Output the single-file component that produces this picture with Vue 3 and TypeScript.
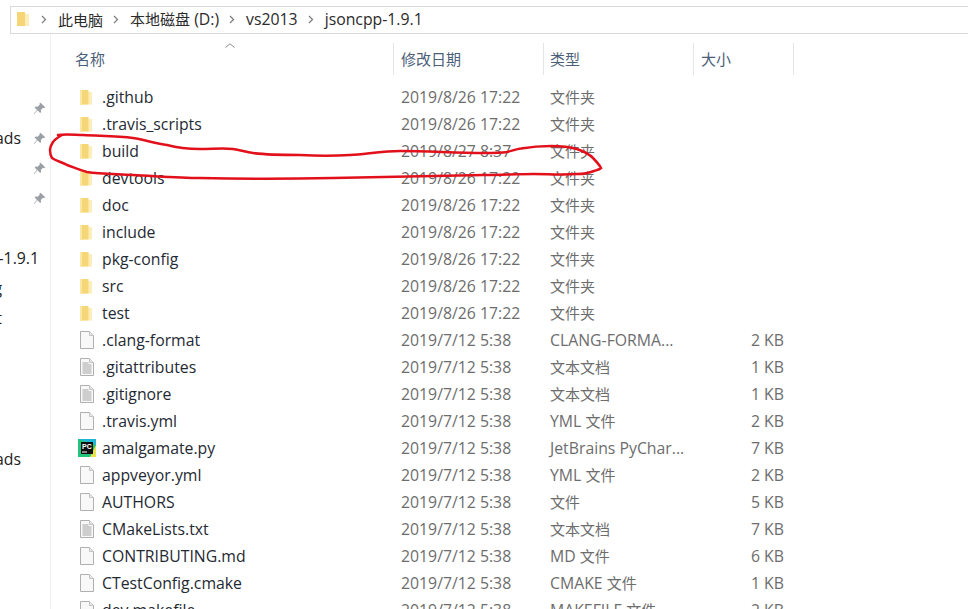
<script setup lang="ts">
type Kind = 'folder' | 'file' | 'text' | 'pycharm'

interface Row {
  name: string
  date: string
  type: string
  size: string
  kind: Kind
}

const folderDate = '2019/8/26 17:22'
const fileDate = '2019/7/12 5:38'

const folders = ['.github', '.travis_scripts', 'build', 'devtools', 'doc', 'include', 'pkg-config', 'src', 'test']

const rows: Row[] = [
  ...folders.map((name): Row => ({
    name,
    date: name === 'build' ? '2019/8/27 8:37' : folderDate,
    type: '文件夹',
    size: '',
    kind: 'folder',
  })),
  { name: '.clang-format', date: fileDate, type: 'CLANG-FORMA...', size: '2 KB', kind: 'file' },
  { name: '.gitattributes', date: fileDate, type: '文本文档', size: '1 KB', kind: 'text' },
  { name: '.gitignore', date: fileDate, type: '文本文档', size: '1 KB', kind: 'text' },
  { name: '.travis.yml', date: fileDate, type: 'YML 文件', size: '2 KB', kind: 'file' },
  { name: 'amalgamate.py', date: fileDate, type: 'JetBrains PyChar...', size: '7 KB', kind: 'pycharm' },
  { name: 'appveyor.yml', date: fileDate, type: 'YML 文件', size: '2 KB', kind: 'file' },
  { name: 'AUTHORS', date: fileDate, type: '文件', size: '5 KB', kind: 'file' },
  { name: 'CMakeLists.txt', date: fileDate, type: '文本文档', size: '7 KB', kind: 'text' },
  { name: 'CONTRIBUTING.md', date: fileDate, type: 'MD 文件', size: '6 KB', kind: 'file' },
  { name: 'CTestConfig.cmake', date: fileDate, type: 'CMAKE 文件', size: '1 KB', kind: 'file' },
  { name: 'dev.makefile', date: fileDate, type: 'MAKEFILE 文件', size: '2 KB', kind: 'file' },
]

const crumbs = ['此电脑', '本地磁盘 (D:)', 'vs2013', 'jsoncpp-1.9.1']

const nav = [
  { label: '', pin: true },
  { label: 'ads', pin: true },
  { label: '', pin: true },
  { label: '', pin: true },
  { label: '', pin: false },
  { label: '-1.9.1', pin: false },
  { label: 'g', pin: false },
  { label: 't', pin: false },
  { label: '', pin: false },
  { label: '', pin: false },
  { label: '', pin: false },
  { label: 'ads', pin: false },
]

// latin runs are set a little larger than the CJK ones, like the system font does
function runs(text: string) {
  return text.split(/([\x00-\x7f]+)/).filter(Boolean).map((t) => ({
    text: t,
    latin: /^[\x00-\x7f]+$/.test(t),
  }))
}

const scribble =
  'M58 135 C66 134 76 135 83 135 C100 136 118 136 133 138 C146 140 156 144 167 145 C178 148 190 149 200 149 C212 149 224 148 233 149 C240 150 246 152 253 153 C268 155 284 155 300 155 C318 156 334 156 350 155 C366 154 384 151 400 151 C428 151 456 153 484 153 C492 153 500 153 507 152 C512 151 516 149 521 148.5 C530 147 541 146 551 146 C560 146 570 147 577 149 C583 151 587 153 591 156 C595 160 599 164 601 168 C599 170 597 170 594 171 C589 173 583 174 577 174 C562 175 548 174 534 174 C518 174 500 175 484 175 C434 176 384 177 333 178 C288 179 244 179 200 178 C178 178 155 176 133 175 C117 174 100 174 87 172 C79 170 73 167 67 165 C62 162 56 161 52 158 C50 155 50 153 50 150 C50 147 51 145 53 142 C55 139 59 137 62 135'
</script>

<template>
  <div class="explorer">
    <div class="address-bar">
      <svg class="crumb-folder" width="12" height="16" viewBox="0 0 12 16">
        <path d="M0 1h6l2 2h4v12H0z" fill="#fdeeb9" />
        <path d="M0 1h8v14H0z" fill="#f5d576" />
      </svg>
      <template v-for="crumb in crumbs" :key="crumb">
        <svg class="chevron" width="6" height="9" viewBox="0 0 6 9">
          <path d="M1 1l3.500 3.500L1 8" fill="none" stroke="#7b7b7b" stroke-width="1.200" />
        </svg>
        <span class="crumb">
          <span v-for="(run, i) in runs(crumb)" :key="i" :class="{ latin: run.latin }">{{ run.text }}</span>
        </span>
      </template>
    </div>

    <div class="body">
      <aside class="sidebar">
        <div v-for="(item, i) in nav" :key="i" class="nav-row" :class="{ 'nav-drop': i === 11 }">
          <span v-if="item.label" class="nav-label" :class="'nav-' + item.label.replace(/[^a-z0-9]/g, '')">{{ item.label }}</span>
          <svg v-if="item.pin" class="pin" width="13" height="13" viewBox="0 0 13 13">
            <path d="M7.500 0.800l4.700 4.500-1.200 .9-1-.5-2.200 2.200 .3 2-1 1-2.500-2.600L1.200 12l-.4-.4 3.200-3.600L1.600 5.500l1-1 2 .3 2.200-2.200-.4-1z" fill="#9aa0a6" />
          </svg>
        </div>
      </aside>

      <main class="list">
        <div class="list-header">
          <div class="col col-name">名称
            <svg class="sort" width="10" height="5" viewBox="0 0 10 5">
              <path d="M.5 4.500L5 .8l4.500 3.700" fill="none" stroke="#8a8a8a" />
            </svg>
          </div>
          <div class="col col-date">修改日期</div>
          <div class="col col-type">类型</div>
          <div class="col col-size">大小</div>
        </div>

        <div class="rows">
          <div v-for="row in rows" :key="row.name" class="row">
            <div class="cell-name">
              <span class="icon">
                <svg v-if="row.kind === 'folder'" width="12" height="16" viewBox="0 0 12 16">
                  <path d="M0 1h6l2 2h4v12.500H0z" fill="#fdeeb9" />
                  <path d="M0 1h8.500v14.500H0z" fill="#f6d777" />
                  <path d="M0 1h2v14.500H0z" fill="#fbe6a2" />
                </svg>
                <svg v-else-if="row.kind === 'pycharm'" class="pc" width="18" height="18" viewBox="0 0 18 18">
                  <rect width="18" height="18" fill="#21c57a" />
                  <path d="M0 0h18v6z" fill="#21b6d6" />
                  <path d="M18 6v12h-6z" fill="#e8e34c" />
                  <rect x="3" y="3" width="12" height="12" fill="#0f0f0f" />
                  <text x="4" y="9.500" class="pc-text">PC</text>
                  <rect x="4" y="12.500" width="5" height="1" fill="#fff" />
                </svg>
                <svg v-else width="14" height="18" viewBox="0 0 14 18">
                  <path d="M.5 .5h9l4 4v13H.5z" fill="#f8f8f8" stroke="#b0b0b0" />
                  <path d="M9.500 .5v4h4" fill="#e8e8e8" stroke="#c4c4c4" />
                  <template v-if="row.kind === 'text'">
                    <path d="M2.500 5h6M2.500 7h9M2.500 9h9M2.500 11h9M2.500 13h9M2.500 15h9" stroke="#a4a4a4" />
                  </template>
                </svg>
              </span>
              <span class="name">{{ row.name }}</span>
            </div>
            <div class="cell cell-date">{{ row.date }}</div>
            <div class="cell cell-type">
              <span v-for="(run, i) in runs(row.type)" :key="i" :class="{ latin: run.latin }">{{ run.text }}</span>
            </div>
            <div class="cell cell-size">{{ row.size }}</div>
          </div>
        </div>
      </main>
    </div>

    <svg class="scribble" width="968" height="609" viewBox="0 0 968 609">
      <path :d="scribble" fill="none" stroke="#e2101b" stroke-width="2.500" stroke-linecap="round" />
    </svg>
  </div>
</template>

<style>
html, body {
  margin: 0;
  background: #fff;
}
</style>

<style scoped>
.explorer {
  position: relative;
  width: 968px;
  height: 609px;
  overflow: hidden;
  background: #fff;
  display: flex;
  flex-direction: column;
  font-family: "Open Sans", "Noto Sans CJK SC", sans-serif;
  font-size: 15px;
  color: #1f2a33;
}

.latin {
  font-size: 15.800px;
}

.address-bar {
  margin: 6px 0 0 10px;
  height: 24px;
  border: 1px solid #d9d9d9;
  border-right: none;
  display: flex;
  align-items: center;
  padding: 0 0 2px 6px;
}

.crumb-folder {
  margin-right: 2px;
}

.chevron {
  margin: 0 11px 0 10px;
}

.crumb {
  color: #2b2b2b;
  white-space: nowrap;
}

.body {
  flex: 1;
  display: flex;
  min-height: 0;
}

.sidebar {
  width: 51px;
  flex: none;
  box-sizing: border-box;
  border-right: 1px solid #f1f1f1;
  padding-top: 59px;
  overflow: hidden;
}

.nav-row {
  position: relative;
  height: 30px;
  display: flex;
  align-items: center;
  font-size: 15.800px;
}

.nav-drop {
  margin-top: 21px;
}

.nav-label {
  position: absolute;
  right: 29px;
  white-space: nowrap;
  color: #222;
}

.nav-19,
.nav-191 {
  right: 11px;
}

.nav-g,
.nav-t {
  right: 48px;
}

.pin {
  position: absolute;
  left: 33px;
}

.list {
  flex: 1;
  min-width: 0;
}

.list-header {
  display: flex;
  height: 32px;
  margin-top: 9px;
}

.col {
  position: relative;
  box-sizing: border-box;
  border-right: 1px solid #e5e5e5;
  display: flex;
  align-items: center;
  color: #4c607a;
  font-size: 15px;
  padding-bottom: 2px;
}

.col-name {
  width: 343px;
  padding-left: 24px;
}

.col-date {
  width: 150px;
  padding-left: 7px;
}

.col-type {
  width: 150px;
  padding-left: 6px;
}

.col-size {
  width: 100px;
  padding-left: 7px;
}

.sort {
  position: absolute;
  left: 174px;
  top: 0;
}

.rows {
  margin-top: 8px;
}

.row {
  height: 27px;
  display: flex;
  align-items: center;
}

.cell-name {
  width: 342px;
  display: flex;
  align-items: center;
  flex: none;
}

.icon {
  width: 51px;
  display: flex;
  padding-left: 29px;
  box-sizing: border-box;
  flex: none;
}

.icon .pc {
  margin-left: -2px;
}

.pc-text {
  font-family: "Liberation Sans", sans-serif;
  font-size: 7px;
  font-weight: 700;
  fill: #fff;
}

.name {
  white-space: nowrap;
  color: #1f2a33;
  font-size: 15.800px;
}

.cell {
  color: #6d6d6d;
  white-space: nowrap;
  flex: none;
}

.cell-date {
  width: 150px;
  padding-left: 8px;
  box-sizing: border-box;
  font-size: 15.800px;
}

.cell-type {
  width: 150px;
  padding-left: 7px;
  box-sizing: border-box;
}

.cell-size {
  width: 91px;
  text-align: right;
  font-size: 15.800px;
}

.scribble {
  position: absolute;
  left: 0;
  top: 0;
  pointer-events: none;
}
</style>
